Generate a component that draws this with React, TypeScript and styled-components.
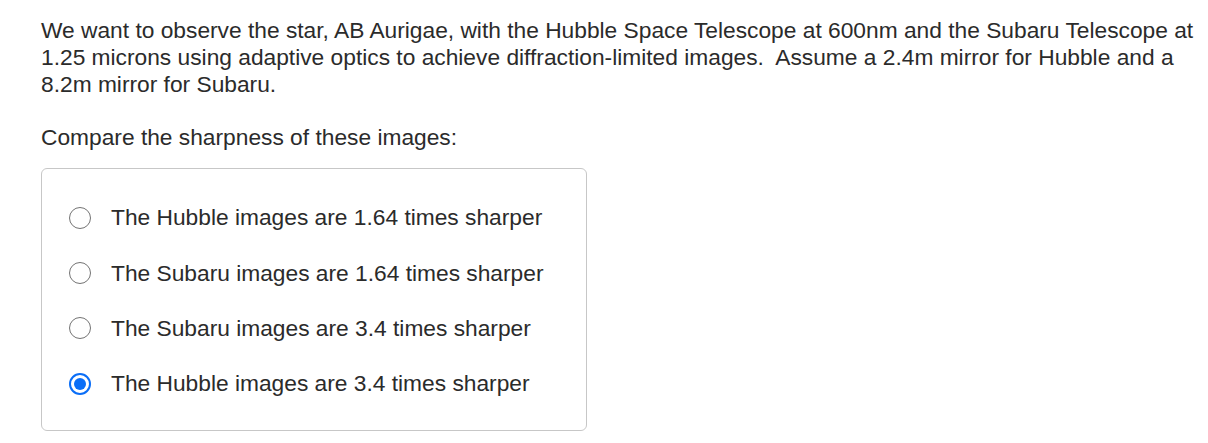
import React from 'react';
import styled, { createGlobalStyle } from 'styled-components';

const GlobalStyle = createGlobalStyle`
  body {
    margin: 0;
    background: #ffffff;
    font-family: "Liberation Sans", Arial, Helvetica, sans-serif;
    color: #2b2b2b;
  }
`;

const Page = styled.div`
  padding: 17px 0 0 41px;
  width: 1167px;
`;

const Text = styled.p`
  margin: 0 0 26px;
  font-size: 22.75px;
  line-height: 27px;
  width: 1160px;
`;

const Prompt = styled(Text)`
  margin-bottom: 17px;
`;

const Answers = styled.div`
  box-sizing: border-box;
  width: 546px;
  height: 263px;
  border: 1px solid #c7c7c7;
  border-radius: 6px;
  padding: 21px 0 0 27px;
`;

const Option = styled.label`
  display: flex;
  align-items: center;
  height: 55.4px;
  font-size: 22.75px;
  cursor: pointer;
`;

const Radio = styled.span<{ $checked?: boolean }>`
  box-sizing: border-box;
  flex: none;
  width: 22px;
  height: 22px;
  border-radius: 50%;
  border: ${p => (p.$checked ? '2px solid #0a6ef7' : '1.5px solid #737373')};
  margin-right: 20px;
  display: flex;
  align-items: center;
  justify-content: center;
  &::after {
    content: '';
    width: 12px;
    height: 12px;
    border-radius: 50%;
    background: #0a6ef7;
    display: ${p => (p.$checked ? 'block' : 'none')};
  }
`;

const options = [
  'The Hubble images are 1.64 times sharper',
  'The Subaru images are 1.64 times sharper',
  'The Subaru images are 3.4 times sharper',
  'The Hubble images are 3.4 times sharper',
];

const App: React.FC = () => (
  <>
    <GlobalStyle />
    <Page>
      <Text>
        We want to observe the star, AB Aurigae, with the Hubble Space Telescope at 600nm and the Subaru Telescope at
        1.25 microns using adaptive optics to achieve diffraction-limited images.&nbsp; Assume a 2.4m mirror for Hubble and a
        8.2m mirror for Subaru.
      </Text>
      <Prompt>Compare the sharpness of these images:</Prompt>
      <Answers>
        {options.map((o, i) => (
          <Option key={o}>
            <Radio $checked={i === 3} />
            {o}
          </Option>
        ))}
      </Answers>
    </Page>
  </>
);

export default App;
